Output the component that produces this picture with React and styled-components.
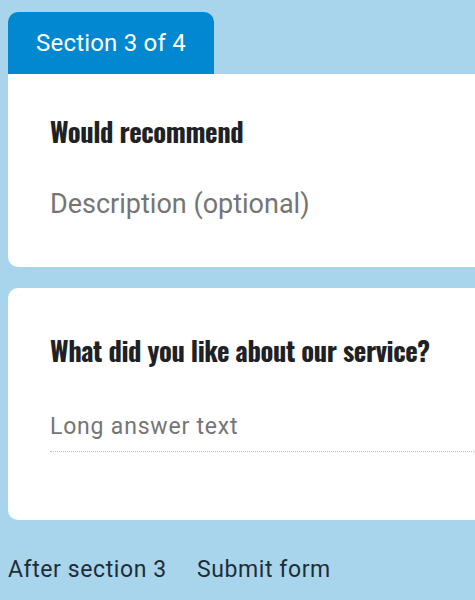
import React from 'react';
import styled, { createGlobalStyle } from 'styled-components';

const GlobalStyle = createGlobalStyle`
  html, body {
    margin: 0;
    padding: 0;
    background: #a9d5ec;
    overflow: hidden;
  }
  body {
    font-family: Roboto, "Liberation Sans", sans-serif;
  }
`;

const Page = styled.div`
  width: 700px;
  padding: 12px 0 0 8px;
  display: flex;
  flex-direction: column;
`;

const Tab = styled.div`
  align-self: flex-start;
  width: 206px;
  height: 62px;
  box-sizing: border-box;
  padding-left: 28px;
  display: flex;
  align-items: center;
  background: #0288d1;
  color: #ffffff;
  font-size: 24px;
  letter-spacing: 0.2px;
  border-radius: 10px 10px 0 0;
`;

const Card = styled.div`
  background: #ffffff;
  border-radius: ${(props) => (props.attached ? '0 0 10px 10px' : '10px')};
  height: ${(props) => props.h}px;
  box-sizing: border-box;
  padding: ${(props) => props.pad} 0 0 42px;
  margin-bottom: 21px;
`;

const Heading = styled.div`
  font-family: Oswald, "Liberation Sans Narrow", "DejaVu Sans Condensed", sans-serif;
  font-weight: 700;
  font-size: 26.6px;
  letter-spacing: -0.4px;
  color: #202124;
  line-height: 34px;
`;

const Description = styled.div`
  margin-top: 40px;
  font-size: 27px;
  color: #757575;
  line-height: 32px;
`;

const AnswerField = styled.div`
  margin-top: 46px;
  padding-bottom: 10px;
  font-size: 23px;
  line-height: 28px;
  letter-spacing: 0.8px;
  color: #757575;
  border-bottom: 1px dotted #bdbdbd;
`;

const Footer = styled.div`
  display: flex;
  gap: 30px;
  margin-top: 15px;
  font-size: 23px;
  letter-spacing: 0.6px;
  color: #1e2d36;
`;

const App = () => (
  <>
    <GlobalStyle />
    <Page>
      <Tab>Section 3 of 4</Tab>
      <Card attached h={193} pad="40px">
        <Heading>Would recommend</Heading>
        <Description>Description (optional)</Description>
      </Card>
      <Card h={232} pad="45px">
        <Heading>What did you like about our service?</Heading>
        <AnswerField>Long answer text</AnswerField>
      </Card>
      <Footer>
        <span>After section 3</span>
        <span>Submit form</span>
      </Footer>
    </Page>
  </>
);

export default App;
